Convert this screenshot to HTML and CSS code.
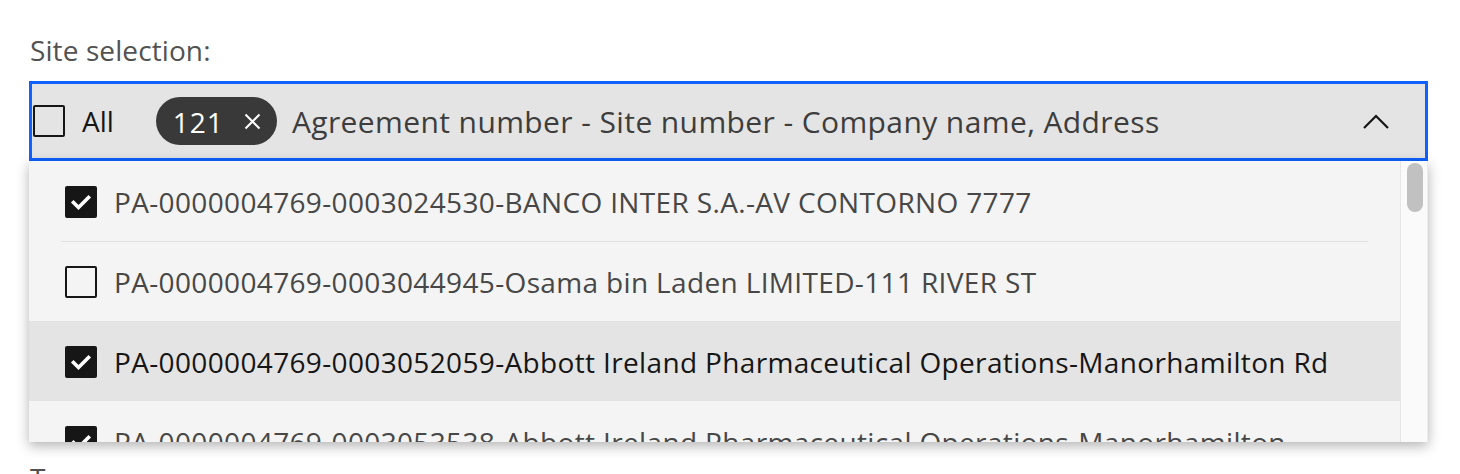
FILE: index.html
```html
<!DOCTYPE html>
<html lang="en">
<head>
<meta charset="utf-8">
<title>Site selection</title>
<link rel="stylesheet" href="styles.css">
</head>
<body>
<div class="page">
  <div class="field-label">Site selection:</div>
  <div class="multiselect">
    <div class="field">
      <label class="all">
        <span class="cb"></span>
        <span class="all-text">All</span>
      </label>
      <span class="tag">
        <span class="tag-count">121</span>
        <svg class="tag-x" width="17" height="17" viewBox="0 0 17 17"><path d="M1.5 1.5 L15.5 15.5 M15.5 1.5 L1.5 15.5" stroke="#ffffff" stroke-width="2" fill="none"/></svg>
      </span>
      <span class="placeholder">Agreement number - Site number - Company name, Address</span>
      <svg class="chevron" width="26" height="15" viewBox="0 0 26 15"><path d="M1 14 L13 2 L25 14" stroke="#161616" stroke-width="2.2" fill="none"/></svg>
    </div>
    <div class="menu">
      <div class="items">
        <div class="item">
          <div class="option">
            <span class="cb checked"><svg width="32" height="32" viewBox="0 0 32 32"><path d="M8.5 16.5 L13.5 21.5 L23.5 11.5" stroke="#ffffff" stroke-width="3.6" fill="none" stroke-linecap="square"/></svg></span>
            <span class="opt-text">PA-0000004769-0003024530-BANCO INTER S.A.-AV CONTORNO 7777</span>
          </div>
        </div>
        <div class="item">
          <div class="option">
            <span class="cb"></span>
            <span class="opt-text">PA-0000004769-0003044945-Osama bin Laden LIMITED-111 RIVER ST</span>
          </div>
        </div>
        <div class="item hover">
          <div class="option">
            <span class="cb checked"><svg width="32" height="32" viewBox="0 0 32 32"><path d="M8.5 16.5 L13.5 21.5 L23.5 11.5" stroke="#ffffff" stroke-width="3.6" fill="none" stroke-linecap="square"/></svg></span>
            <span class="opt-text">PA-0000004769-0003052059-Abbott Ireland Pharmaceutical Operations-Manorhamilton Rd</span>
          </div>
        </div>
        <div class="item after-hover">
          <div class="option">
            <span class="cb checked"><svg width="32" height="32" viewBox="0 0 32 32"><path d="M8.5 16.5 L13.5 21.5 L23.5 11.5" stroke="#ffffff" stroke-width="3.6" fill="none" stroke-linecap="square"/></svg></span>
            <span class="opt-text">PA-0000004769-0003053538-Abbott Ireland Pharmaceutical Operations-Manorhamilton</span>
          </div>
        </div>
      </div>
      <div class="scrollbar"><div class="thumb"></div></div>
    </div>
  </div>
  <div class="field-label next">To</div>
</div>
</body>
</html>
```
FILE: styles.css
```css
html, body {
  margin: 0;
  padding: 0;
  background: #ffffff;
}
body {
  font-family: "Open Sans", "Noto Sans", sans-serif;
  font-size: 28px;
  color: #161616;
  overflow: hidden;
}
.page {
  width: 1399px;
  padding: 30px 0 0 29px;
}
.field-label {
  font-size: 28px;
  line-height: 40px;
  color: #525252;
  padding-left: 1px;
  margin-bottom: 11px;
  letter-spacing: 0.1px;
}
.field-label.next {
  margin-top: 16px;
}
.multiselect {
  display: flex;
  flex-direction: column;
}
.field {
  box-sizing: border-box;
  height: 80px;
  border: 3px solid #0f62fe;
  background: #e4e4e4;
  display: flex;
  align-items: center;
  padding-left: 1px;
}
.cb {
  box-sizing: border-box;
  width: 32px;
  height: 32px;
  border: 2px solid #161616;
  border-radius: 2px;
  flex: none;
  display: block;
}
.cb.checked {
  background: #161616;
  border: none;
}
.cb svg {
  display: block;
}
.all {
  display: flex;
  align-items: center;
}
.all-text {
  margin-left: 17px;
  color: #161616;
}
.tag {
  margin-left: 42px;
  height: 48px;
  border-radius: 24px;
  background: #393939;
  color: #ffffff;
  display: flex;
  align-items: center;
  padding: 0 16px 0 17px;
}
.tag-count {
  line-height: 48px;
  letter-spacing: 1px;
  padding-top: 2px;
}
.tag-x {
  margin-left: 20px;
  display: block;
}
.placeholder {
  margin-left: 15px;
  font-size: 30px;
  letter-spacing: 0.4px;
  color: #3d3d3d;
  flex: 1;
  white-space: nowrap;
}
.chevron {
  margin-right: 36px;
  display: block;
}
.menu {
  height: 281px;
  background: #f4f4f4;
  box-shadow: 0 4px 12px rgba(0, 0, 0, 0.3);
  display: flex;
  overflow: hidden;
  position: relative;
  z-index: 1;
}
.items {
  flex: 1;
  overflow: hidden;
}
.item {
  height: 80px;
  padding: 0 32px;
}
.item + .item .option {
  border-top: 1px solid #e0e0e0;
}
.item.hover {
  background: #e4e4e4;
}
.item.hover .option,
.item.after-hover .option {
  border-top-color: transparent;
}
.option {
  box-sizing: border-box;
  height: 80px;
  display: flex;
  align-items: center;
  padding-left: 4px;
}
.item:first-child .option {
  padding-top: 2px;
}
.opt-text {
  margin-left: 17px;
  color: #474747;
  letter-spacing: 0.35px;
  white-space: nowrap;
}
.item.hover .opt-text {
  color: #161616;
}
.scrollbar {
  flex: none;
  background: #fafafa;
  border-left: 1px solid #e6e6e6;
  border-right: 1px solid #ececec;
  padding: 2px 0 0 6px;
  box-sizing: border-box;
  width: 28px;
}
.thumb {
  width: 16px;
  height: 49px;
  border-radius: 8px;
  background: #c1c1c1;
}
```
